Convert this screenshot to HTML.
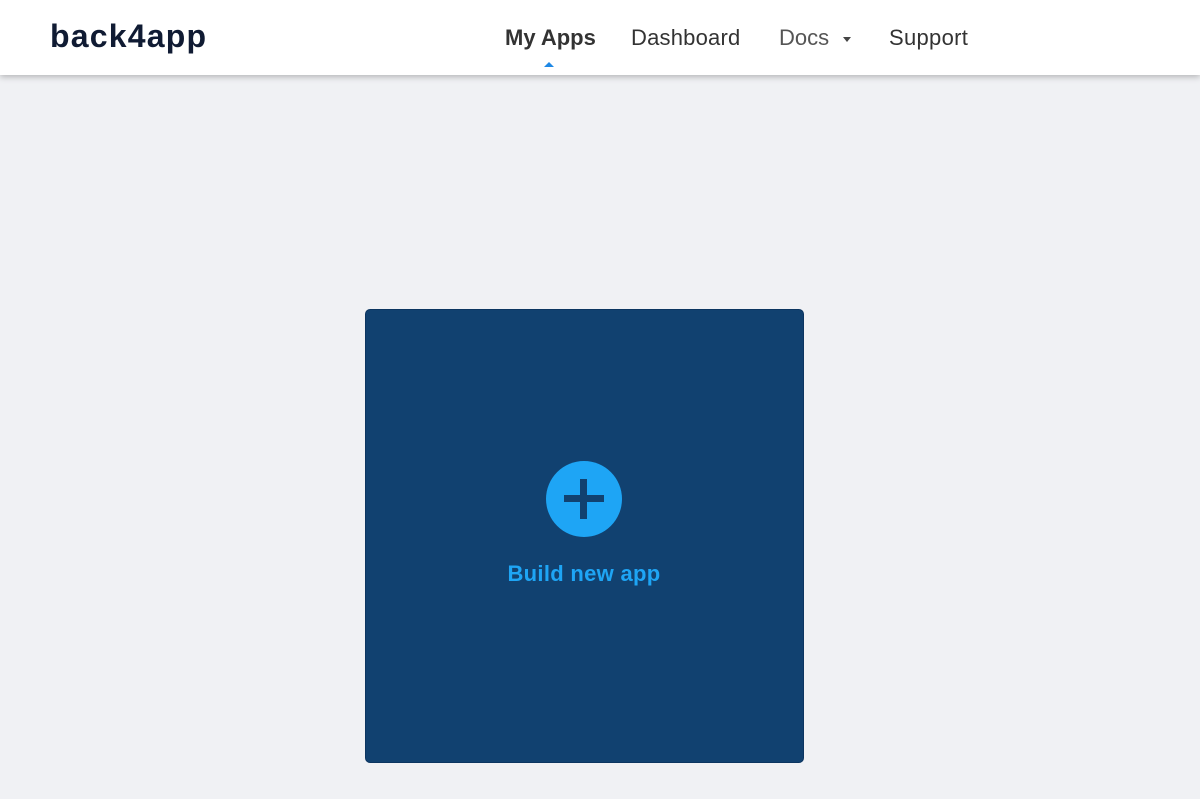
<!DOCTYPE html>
<html><head><style>
body{margin:0;width:1200px;height:799px;background:#f0f1f4;font-family:"Liberation Sans",sans-serif;overflow:hidden;position:relative}
.hdr{position:absolute;left:0;top:0;width:1200px;height:75px;background:#fff;box-shadow:0 2px 6px rgba(0,0,0,.25)}
.logo{position:absolute;left:50px;top:18px;font-size:32px;font-weight:bold;color:#101b33;letter-spacing:1.2px}
.nav{position:absolute;top:25px;font-size:22px;color:#333;white-space:nowrap}
.card{position:absolute;left:365px;top:309px;width:437px;height:452px;background:#114170;border:1px solid #0c3560;border-radius:5px}
.circ{position:absolute;left:546px;top:461px;width:76px;height:76px;border-radius:50%;background:#1ea5f5}
.lbl{position:absolute;left:365px;width:438px;top:561px;text-align:center;color:#1ea5f5;font-weight:bold;font-size:22px;letter-spacing:0.3px}
</style></head><body>
<div class="hdr">
<div class="logo">back4app</div>
<div class="nav" style="left:505px;font-weight:bold;color:#333">My Apps</div>
<div style="position:absolute;left:544px;top:62px;width:0;height:0;border-left:5px solid transparent;border-right:5px solid transparent;border-bottom:5px solid #1e88e5"></div>
<div class="nav" style="left:631px;letter-spacing:0.2px">Dashboard</div>
<div class="nav" style="left:779px;color:#555">Docs</div>
<div style="position:absolute;left:843px;top:37px;width:0;height:0;border-left:4px solid transparent;border-right:4px solid transparent;border-top:5px solid #444"></div>
<div class="nav" style="left:889px;letter-spacing:0.3px">Support</div>
</div>
<div class="card"></div>
<div class="circ">
<div style="position:absolute;left:18px;top:34px;width:40px;height:7px;background:#114170"></div>
<div style="position:absolute;left:34px;top:18px;width:7px;height:40px;background:#114170"></div>
</div>
<div class="lbl">Build new app</div>
</body></html>
